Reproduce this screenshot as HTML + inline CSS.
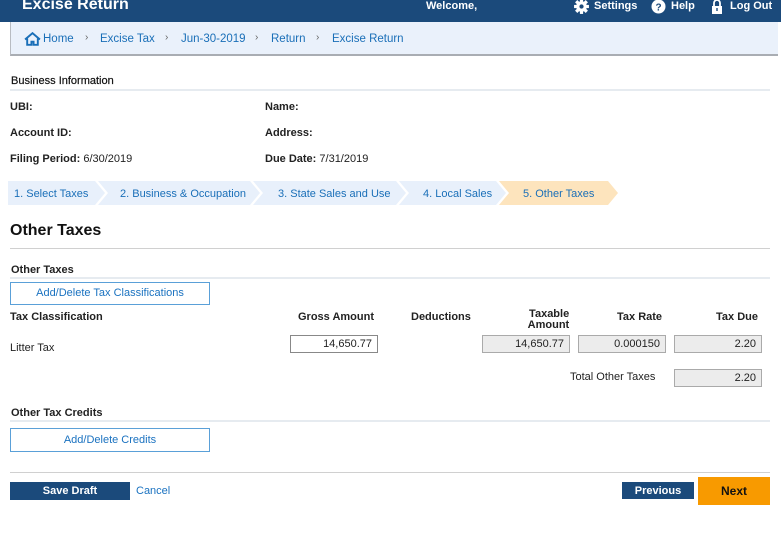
<!DOCTYPE html>
<html><head><meta charset="utf-8"><style>
*{margin:0;padding:0;box-sizing:border-box}
body{width:781px;height:534px;background:#fff;font-family:"Liberation Sans",Arial,sans-serif;font-size:11px;color:#222;position:relative;overflow:hidden}
.a{position:absolute;white-space:nowrap}
.hdr{position:absolute;left:0;top:0;width:781px;height:22px;background:#1b4a7b;color:#fff}
.bc{position:absolute;left:10px;top:22px;width:768px;height:34px;background:#eaf1fb;border-left:1px solid #b8bcc2;border-bottom:2px solid #a9adb3;color:#1a6fb8}
.line{position:absolute;height:1px;background:#d0d0d0}
.lline{position:absolute;height:2px;background:#e6ebf0}
.b{font-weight:bold}
.btn{position:absolute;border:1px solid #5aa0d8;color:#1a72c0;text-align:center;background:#fff;font-size:11px}
.inp{position:absolute;height:18px;border:1px solid #aaa;background:#ececec;text-align:right;padding-right:5px;line-height:16px;font-size:11px}
.th{font-weight:bold;font-size:11px}
</style></head><body>
<div class="hdr">
 <div class="a b" style="left:22px;top:-4px;font-size:16px">Excise Return</div>
 <div class="a b" style="left:426px;top:0px;font-size:11px">Welcome,</div>
 <svg class="a" style="left:573px;top:-1px" width="17" height="15" viewBox="0 0 16 14"><circle cx="8" cy="7" r="5" fill="#fff"/><g stroke="#fff" stroke-width="3"><line x1="8" y1="0" x2="8" y2="14"/><line x1="1" y1="7" x2="15" y2="7"/><line x1="3" y1="2" x2="13" y2="12"/><line x1="13" y1="2" x2="3" y2="12"/></g><circle cx="8" cy="7" r="2" fill="#1b4a7b"/></svg>
 <div class="a b" style="left:594px;top:0px">Settings</div>
 <svg class="a" style="left:651px;top:-1px" width="15" height="15"><circle cx="7.5" cy="7.5" r="7" fill="#fff"/><text x="7.5" y="11.5" font-size="10" font-weight="bold" fill="#1b4a7b" text-anchor="middle" font-family="Liberation Sans">?</text></svg>
 <div class="a b" style="left:671px;top:0px">Help</div>
 <svg class="a" style="left:711px;top:-1px" width="12" height="15"><path d="M3 7V4a3 3 0 0 1 6 0v3" stroke="#fff" stroke-width="1.8" fill="none"/><rect x="1" y="7" width="10" height="8" fill="#fff"/><rect x="5.3" y="9" width="1.4" height="3" fill="#1b4a7b"/></svg>
 <div class="a b" style="left:730px;top:0px">Log Out</div>
</div>
<div class="bc">
 <svg class="a" style="left:13px;top:10px" width="17" height="14" viewBox="0 0 16 13"><path d="M1 7L8 1l7 6M3 6v6h4V9h2v3h4V6" stroke="#1a6fb8" stroke-width="1.8" fill="none"/></svg>
 <div class="a" style="left:32px;top:11px;font-size:11.5px">Home</div>
 <div class="a" style="left:74px;top:10px;color:#666;font-size:10px">›</div>
 <div class="a" style="left:89px;top:11px;font-size:11.5px">Excise Tax</div>
 <div class="a" style="left:154px;top:10px;color:#666;font-size:10px">›</div>
 <div class="a" style="left:170px;top:11px;font-size:11.5px">Jun-30-2019</div>
 <div class="a" style="left:244px;top:10px;color:#666;font-size:10px">›</div>
 <div class="a" style="left:260px;top:11px;font-size:11.5px">Return</div>
 <div class="a" style="left:305px;top:10px;color:#666;font-size:10px">›</div>
 <div class="a" style="left:321px;top:11px;font-size:11.5px">Excise Return</div>
</div>
<div class="a b" style="left:11px;top:75px;font-weight:normal;color:#111;-webkit-text-stroke:0.2px #111">Business Information</div>
<div class="lline" style="left:10px;top:89px;width:760px"></div>
<div class="a b" style="left:10px;top:101px">UBI:</div>
<div class="a b" style="left:265px;top:101px">Name:</div>
<div class="a b" style="left:10px;top:127px">Account ID:</div>
<div class="a b" style="left:265px;top:127px">Address:</div>
<div class="a" style="left:10px;top:153px"><b>Filing Period:</b> 6/30/2019</div>
<div class="a" style="left:265px;top:153px"><b>Due Date:</b> 7/31/2019</div>
<svg class="a" style="left:0;top:181px" width="781" height="25">
 <polygon points="8,0 95,0 105,12 95,24 8,24" fill="#e8f0fb"/>
 <polygon points="98,0 250,0 260,12 250,24 98,24 108,12" fill="#e8f0fb"/>
 <polygon points="253,0 396,0 406,12 396,24 253,24 263,12" fill="#e8f0fb"/>
 <polygon points="399,0 496,0 506,12 496,24 399,24 409,12" fill="#e8f0fb"/>
 <polygon points="499,0 608,0 618,12 608,24 499,24 509,12" fill="#fde4bd"/>
 <g font-family="Liberation Sans" font-size="11" fill="#1a6fb8">
 <text x="14" y="16">1. Select Taxes</text>
 <text x="120" y="16">2. Business &amp; Occupation</text>
 <text x="278" y="16">3. State Sales and Use</text>
 <text x="423" y="16">4. Local Sales</text>
 <text x="523" y="16">5. Other Taxes</text></g>
</svg>
<div class="a b" style="left:10px;top:222px;font-size:16px;color:#111">Other Taxes</div>
<div class="line" style="left:10px;top:248px;width:760px"></div>
<div class="a b" style="left:11px;top:264px">Other Taxes</div>
<div class="lline" style="left:10px;top:277px;width:760px"></div>
<div class="btn" style="left:10px;top:282px;width:200px;height:23px;line-height:21px">Add/Delete Tax Classifications</div>
<div class="a th" style="left:10px;top:311px">Tax Classification</div>
<div class="a th" style="left:298px;top:311px">Gross Amount</div>
<div class="a th" style="left:411px;top:311px">Deductions</div>
<div class="a th" style="left:526px;top:309px;text-align:right;line-height:11px">&nbsp;Taxable<br>Amount</div>
<div class="a th" style="left:617px;top:311px">Tax Rate</div>
<div class="a th" style="left:716px;top:311px">Tax Due</div>
<div class="a" style="left:10px;top:342px">Litter Tax</div>
<div class="inp" style="left:290px;top:335px;width:88px;background:#fff;border-color:#888">14,650.77</div>
<div class="inp" style="left:482px;top:335px;width:88px">14,650.77</div>
<div class="inp" style="left:578px;top:335px;width:88px">0.000150</div>
<div class="inp" style="left:674px;top:335px;width:88px">2.20</div>
<div class="a" style="left:570px;top:371px">Total Other Taxes</div>
<div class="inp" style="left:674px;top:369px;width:88px">2.20</div>
<div class="a b" style="left:11px;top:407px">Other Tax Credits</div>
<div class="lline" style="left:10px;top:420px;width:760px"></div>
<div class="btn" style="left:10px;top:428px;width:200px;height:24px;line-height:22px">Add/Delete Credits</div>
<div class="line" style="left:10px;top:472px;width:760px"></div>
<div class="a b" style="left:10px;top:482px;width:120px;height:18px;background:#1b4a7b;color:#fff;text-align:center;line-height:18px">Save Draft</div>
<div class="a" style="left:136px;top:485px;color:#1a72c0">Cancel</div>
<div class="a b" style="left:622px;top:482px;width:72px;height:17px;background:#1b4a7b;color:#fff;text-align:center;line-height:18px">Previous</div>
<div class="a b" style="left:698px;top:477px;width:72px;height:28px;background:#f89a00;color:#111;text-align:center;line-height:28px;font-size:12px">Next</div>
</body></html>
